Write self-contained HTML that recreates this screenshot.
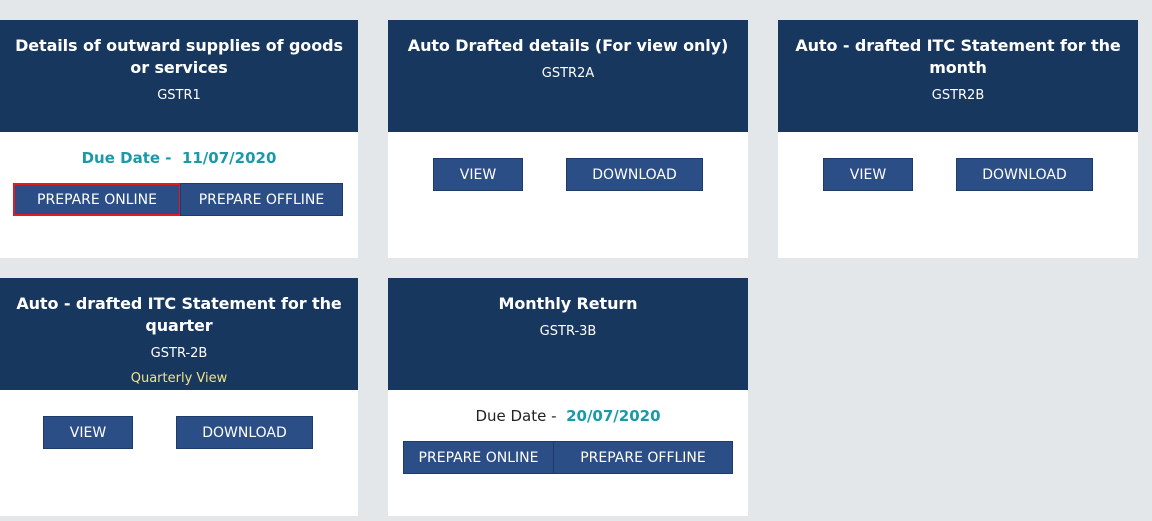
<!DOCTYPE html>
<html><head><style>
body{margin:0;width:1152px;height:521px;background:#e4e7ea;position:relative;overflow:hidden;font-family:"DejaVu Sans","Liberation Sans",sans-serif;}
.card{position:absolute;width:360px;height:238px;background:#fff;}
.hd{position:absolute;left:0;top:0;width:100%;height:112px;background:#17375e;color:#fff;text-align:center;}
.t{font-weight:bold;font-size:16px;line-height:22px;margin-top:15px;padding:0 8px;letter-spacing:-0.1px}
.s{font-size:13px;line-height:20px;margin-top:7px}
.q{font-size:13px;color:#eee38a;margin-top:7px}
.b{position:absolute;height:33px;background:#2c4e86;border:1px solid #1f3b6a;box-sizing:border-box;color:#fff;font-size:14px;line-height:33px;text-align:center}
.due{position:absolute;width:100%;text-align:center;font-size:15px}
</style></head><body>
<div class="card" style="left:0;top:20px;width:358px">
 <div class="hd"><div class="t">Details of outward supplies of goods or services</div><div class="s">GSTR1</div></div>
 <div class="due" style="top:129px;color:#1a9aa8;font-weight:bold">Due Date - &nbsp;11/07/2020</div>
 <div class="b" style="left:13px;top:163px;width:168px;border:2px solid #e21b23;line-height:31px">PREPARE ONLINE</div>
 <div class="b" style="left:180px;top:163px;width:163px">PREPARE OFFLINE</div>
</div>
<div class="card" style="left:388px;top:20px">
 <div class="hd"><div class="t">Auto Drafted details (For view only)</div><div class="s">GSTR2A</div></div>
 <div class="b" style="left:45px;top:138px;width:90px">VIEW</div>
 <div class="b" style="left:178px;top:138px;width:137px">DOWNLOAD</div>
</div>
<div class="card" style="left:778px;top:20px">
 <div class="hd"><div class="t">Auto - drafted ITC Statement for the month</div><div class="s">GSTR2B</div></div>
 <div class="b" style="left:45px;top:138px;width:90px">VIEW</div>
 <div class="b" style="left:178px;top:138px;width:137px">DOWNLOAD</div>
</div>
<div class="card" style="left:0;top:278px;width:358px">
 <div class="hd"><div class="t">Auto - drafted ITC Statement for the quarter</div><div class="s">GSTR-2B</div><div class="q">Quarterly View</div></div>
 <div class="b" style="left:43px;top:138px;width:90px">VIEW</div>
 <div class="b" style="left:176px;top:138px;width:137px">DOWNLOAD</div>
</div>
<div class="card" style="left:388px;top:278px">
 <div class="hd"><div class="t">Monthly Return</div><div class="s">GSTR-3B</div></div>
 <div class="due" style="top:129px;color:#222">Due Date - &nbsp;<b style="color:#1a9aa8">20/07/2020</b></div>
 <div class="b" style="left:15px;top:163px;width:151px">PREPARE ONLINE</div>
 <div class="b" style="left:165px;top:163px;width:180px">PREPARE OFFLINE</div>
</div>
</body></html>
